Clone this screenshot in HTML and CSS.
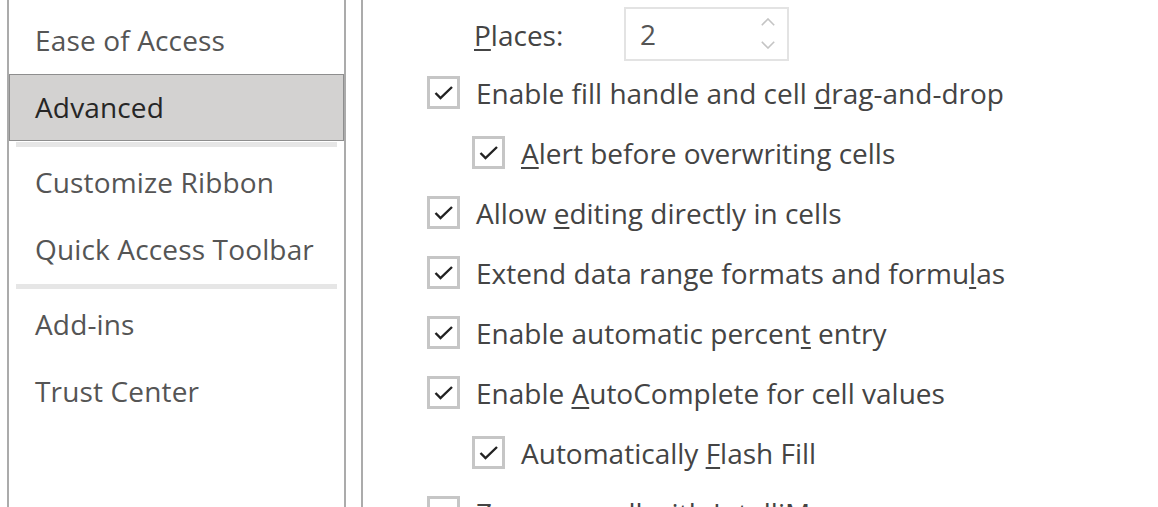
FILE: index.html
```html
<!DOCTYPE html>
<html lang="en">
<head>
<meta charset="utf-8">
<title>Options - Advanced</title>
<link rel="stylesheet" href="styles.css">
</head>
<body>
<div class="window">
  <nav class="nav">
    <div class="nav-item">Ease of Access</div>
    <div class="nav-item selected">Advanced</div>
    <div class="nav-sep"></div>
    <div class="nav-item">Customize Ribbon</div>
    <div class="nav-item">Quick Access Toolbar</div>
    <div class="nav-sep"></div>
    <div class="nav-item">Add-ins</div>
    <div class="nav-item">Trust Center</div>
  </nav>
  <div class="divider"></div>
  <main class="content">
    <div class="places-row">
      <span class="places-label"><u>P</u>laces:</span>
      <div class="spin">
        <span class="spin-value">2</span>
        <div class="spin-arrows">
          <svg class="chev" width="14" height="8" viewBox="0 0 14 8"><polyline points="0.8,7.2 7,1 13.2,7.2" fill="none" stroke="#c4c4c4" stroke-width="1.6"/></svg>
          <svg class="chev down" width="14" height="8" viewBox="0 0 14 8"><polyline points="0.8,0.8 7,7 13.2,0.8" fill="none" stroke="#c4c4c4" stroke-width="1.6"/></svg>
        </div>
      </div>
    </div>

    <div class="opt">
      <span class="box"><svg width="27" height="27" viewBox="0 0 27 27"><polyline points="5.5,14 10.5,19 22,8" fill="none" stroke="#222" stroke-width="2.4"/></svg></span>
      <span class="lbl">Enable fill handle and cell <u>d</u>rag-and-drop</span>
    </div>
    <div class="opt sub">
      <span class="box"><svg width="27" height="27" viewBox="0 0 27 27"><polyline points="5.5,14 10.5,19 22,8" fill="none" stroke="#222" stroke-width="2.4"/></svg></span>
      <span class="lbl"><u>A</u>lert before overwriting cells</span>
    </div>
    <div class="opt">
      <span class="box"><svg width="27" height="27" viewBox="0 0 27 27"><polyline points="5.5,14 10.5,19 22,8" fill="none" stroke="#222" stroke-width="2.4"/></svg></span>
      <span class="lbl">Allow <u>e</u>diting directly in cells</span>
    </div>
    <div class="opt">
      <span class="box"><svg width="27" height="27" viewBox="0 0 27 27"><polyline points="5.5,14 10.5,19 22,8" fill="none" stroke="#222" stroke-width="2.4"/></svg></span>
      <span class="lbl">Extend data range formats and formu<u>l</u>as</span>
    </div>
    <div class="opt">
      <span class="box"><svg width="27" height="27" viewBox="0 0 27 27"><polyline points="5.5,14 10.5,19 22,8" fill="none" stroke="#222" stroke-width="2.4"/></svg></span>
      <span class="lbl">Enable automatic percen<u>t</u> entry</span>
    </div>
    <div class="opt">
      <span class="box"><svg width="27" height="27" viewBox="0 0 27 27"><polyline points="5.5,14 10.5,19 22,8" fill="none" stroke="#222" stroke-width="2.4"/></svg></span>
      <span class="lbl">Enable <u>A</u>utoComplete for cell values</span>
    </div>
    <div class="opt sub">
      <span class="box"><svg width="27" height="27" viewBox="0 0 27 27"><polyline points="5.5,14 10.5,19 22,8" fill="none" stroke="#222" stroke-width="2.4"/></svg></span>
      <span class="lbl">Automatically <u>F</u>lash Fill</span>
    </div>
    <div class="opt">
      <span class="box"></span>
      <span class="lbl">Zoom on <u>r</u>oll with IntelliMouse</span>
    </div>
  </main>
</div>
</body>
</html>
```

FILE: styles.css
```css
html, body {
  margin: 0;
  padding: 0;
  background: #ffffff;
}

body {
  font-family: "Open Sans", "Noto Sans", sans-serif;
  font-size: 28px;
  color: #444444;
  height: 507px;
  overflow: hidden;
}

.window {
  display: flex;
  height: 507px;
  padding-left: 7px;
}

.nav {
  width: 335px;
  flex: none;
  border-left: 2px solid #ababab;
  border-right: 2px solid #ababab;
  padding-top: 7px;
  display: flex;
  flex-direction: column;
}

.nav-item {
  height: 67px;
  line-height: 67px;
  padding-left: 26px;
  color: #555555;
  white-space: nowrap;
  box-sizing: border-box;
  letter-spacing: 0.15px;
}

.nav-item.selected {
  background: #d3d2d1;
  border: 1px solid #8e8e8e;
  line-height: 65px;
  padding-left: 25px;
  color: #262626;
}

.nav-sep {
  height: 5px;
  margin: 1px 7px 2px;
  background: #e6e6e6;
  flex: none;
}

.divider {
  width: 0;
  margin-left: 15px;
  border-left: 2px solid #ababab;
  flex: none;
}

.content {
  padding-left: 64px;
  display: flex;
  flex-direction: column;
}

.places-row {
  display: flex;
  align-items: flex-start;
  height: 62px;
  padding-left: 47px;
}

.places-label {
  width: 150px;
  line-height: 54px;
  margin-top: 8px;
}

.spin {
  margin-top: 7px;
  width: 165px;
  height: 54px;
  box-sizing: border-box;
  border: 2px solid #e3e3e3;
  display: flex;
  align-items: center;
  justify-content: space-between;
  padding: 0 12px 0 14px;
}

.spin-value {
  color: #555555;
  line-height: 50px;
}

.spin-arrows {
  display: flex;
  flex-direction: column;
  gap: 15px;
  margin-top: -2px;
}

.chev {
  display: block;
}

.opt {
  display: flex;
  align-items: center;
  height: 60px;
  flex: none;
  white-space: nowrap;
}

.opt.sub {
  padding-left: 45px;
}

.box {
  width: 33px;
  height: 33px;
  box-sizing: border-box;
  border: 3px solid #c6c6c6;
  background: #ffffff;
  flex: none;
  margin-right: 16px;
}

.box svg {
  display: block;
}

.lbl {
  line-height: 60px;
  padding-top: 2px;
}

u {
  text-decoration-thickness: 1.5px;
  text-underline-offset: 3px;
}
```
